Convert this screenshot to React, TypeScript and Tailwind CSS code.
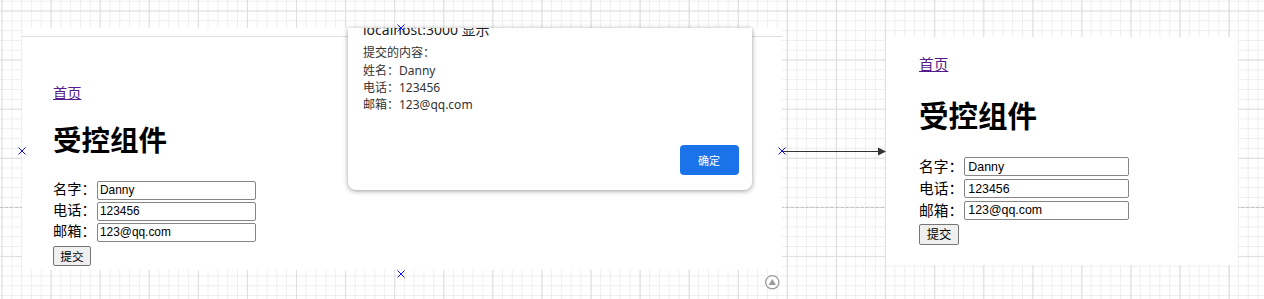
import React from "react";

function XMark({ className }: { className: string }) {
  return (
    <svg className={"absolute " + className} width="8" height="8" viewBox="0 0 8 8">
      <path d="M0.5 0.5 L7.5 7.5 M7.5 0.5 L0.5 7.5" stroke="#1010ff" strokeWidth="1" fill="none" />
    </svg>
  );
}

const rows: [string, string][] = [
  ["名字：", "Danny"],
  ["电话：", "123456"],
  ["邮箱：", "123@qq.com"],
];

export default function App() {
  return (
    <div className="relative w-[1264px] h-[299px] overflow-hidden bg-white [background-image:linear-gradient(to_right,#dedede_1px,transparent_1px),linear-gradient(to_bottom,#dedede_1px,transparent_1px),linear-gradient(to_right,#eeeeee_1px,transparent_1px),linear-gradient(to_bottom,#eeeeee_1px,transparent_1px)] [background-size:49.1px_49.1px,49.1px_49.1px,9.82px_9.82px,9.82px_9.82px] [background-position:1.5px_10.5px] [font-family:'Noto_Sans_CJK_SC',sans-serif]">
      {/* page break line */}
      <div className="absolute left-0 right-0 top-[207px] border-t border-dashed border-[#c2c2c2]" />

      {/* left screenshot */}
      <div className="absolute left-[22px] top-[28px] w-[760px] h-[242px] bg-white">
        <div className="mt-[8px] border-t border-[#dfdfdf] pl-[31px] pt-[47.6px]">
          <a className="block w-fit text-[14.2px] leading-none text-[#551a8b] underline underline-offset-[1px]">首页</a>
          <h1 className="mt-[26.1px] text-[28.5px] leading-none font-bold text-black">受控组件</h1>
          <div className="mt-[27.3px] flex flex-col gap-[2px]">
            {rows.map(([l, v]) => (
              <div key={l} className="flex items-start">
                <span className="w-[43.7px] text-[14.2px] leading-none text-black">{l}</span>
                <input
                  readOnly
                  value={v}
                  className="w-[159px] h-[19px] border border-[#858585] rounded-[2px] px-[2.3px] text-[11.9px] text-black [font-family:'Liberation_Sans',Arial,sans-serif] outline-none"
                />
              </div>
            ))}
          </div>
          <button className="mt-[-0.7px] w-[38px] h-[20px] bg-[#efefef] border border-[#767676] rounded-[2px] text-[11.7px] leading-none text-black">
            提交
          </button>
        </div>
      </div>

      {/* alert dialog */}
      <div className="absolute left-[348px] top-[28px] w-[404px] h-[161.5px] bg-white rounded-b-[8px] overflow-hidden shadow-[0_1px_5px_rgba(0,0,0,0.4)] [font-family:'Noto_Sans','Noto_Sans_CJK_SC',sans-serif] text-[#202124]">
        <div className="pl-[15px] pr-[13.5px]">
          <div className="mt-[-8.4px] text-[14px] leading-[20px]">localhost:3000 显示</div>
          <div className="mt-[4.6px] text-[12px] leading-[17.3px] text-[#333333]">
            <div>提交的内容：</div>
            <div>姓名：Danny</div>
            <div>电话：123456</div>
            <div>邮箱：123@qq.com</div>
          </div>
          <div className="mt-[31.9px] flex justify-end">
            <button className="w-[59px] h-[29.5px] bg-[#1a73e8] rounded-[4px] text-white text-[11px] leading-none">
              确定
            </button>
          </div>
        </div>
      </div>

      {/* right screenshot */}
      <div className="absolute left-[886px] top-[37px] w-[352px] h-[228px] bg-white">
        <div className="pl-[33px] pt-[19.5px]">
          <a className="block w-fit text-[14.7px] leading-none text-[#551a8b] underline underline-offset-[1px]">首页</a>
          <h1 className="mt-[28.6px] text-[29.5px] leading-none font-bold text-black">受控组件</h1>
          <div className="mt-[28px] flex flex-col gap-[2.8px]">
            {rows.map(([l, v]) => (
              <div key={l} className="flex items-start">
                <span className="mt-[2px] w-[45.3px] text-[14.7px] leading-none text-black">{l}</span>
                <input
                  readOnly
                  value={v}
                  className="w-[165px] h-[19px] border border-[#858585] rounded-[2px] px-[3px] text-[12.4px] text-black [font-family:'Liberation_Sans',Arial,sans-serif] outline-none"
                />
              </div>
            ))}
          </div>
          <button className="mt-[0.8px] w-[40px] h-[21px] bg-[#efefef] border border-[#767676] rounded-[2px] text-[12.3px] leading-none text-black">
            提交
          </button>
        </div>
      </div>

      {/* connector arrow */}
      <svg className="absolute left-[781px] top-[146px]" width="106" height="11" viewBox="0 0 106 11">
        <path d="M1 5.5 L98 5.5" stroke="#333333" strokeWidth="1" />
        <path d="M97 1.5 L105 5.5 L97 9.5 Z" fill="#333333" />
      </svg>

      {/* connection markers */}
      <XMark className="left-[397px] top-[24px]" />
      <XMark className="left-[18px] top-[147px]" />
      <XMark className="left-[778px] top-[147px]" />
      <XMark className="left-[397px] top-[270px]" />

      {/* collapse button */}
      <svg className="absolute left-[764px] top-[274px]" width="17" height="17" viewBox="0 0 17 17">
        <circle cx="8.3" cy="8.3" r="6.6" fill="white" stroke="#9a9a9a" strokeWidth="1.3" />
        <path d="M4.6 11 L8.3 5 L12 11 Z" fill="#9a9a9a" />
      </svg>
    </div>
  );
}
